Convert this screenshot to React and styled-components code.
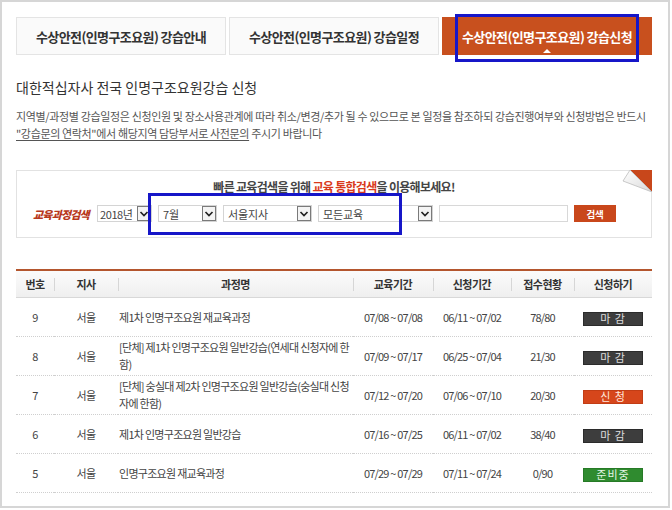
import React from "react";
import styled, { createGlobalStyle } from "styled-components";

const GlobalStyle = createGlobalStyle`
  html, body {
    margin: 0;
    padding: 0;
    background: #fff;
  }
  body {
    font-family: "Noto Sans CJK KR", "Noto Sans", sans-serif;
    color: #333;
  }
`;

const Frame = styled.div`
  position: relative;
  width: 670px;
  height: 508px;
  box-sizing: border-box;
  border: 2px solid #d6d6d6;
  padding: 15px 16px 0 14px;
  overflow: hidden;
`;

const Tabs = styled.div`
  display: grid;
  grid-template-columns: repeat(3, 1fr);
  gap: 3px;
`;

const Tab = styled.div`
  position: relative;
  height: 38px;
  box-sizing: border-box;
  display: flex;
  align-items: center;
  justify-content: center;
  font-size: 13px;
  font-weight: 700;
  letter-spacing: -0.6px;
  color: ${p => (p.active ? "#fff" : "#333")};
  background: ${p => (p.active ? "#c8501e" : "#fafafa")};
  border: 1px solid ${p => (p.active ? "#c8501e" : "#e4e4e4")};

  &::after {
    content: "";
    display: ${p => (p.active ? "block" : "none")};
    position: absolute;
    left: 50%;
    bottom: 1px;
    margin-left: -4px;
    border-left: 4px solid transparent;
    border-right: 4px solid transparent;
    border-bottom: 4px solid #fff;
  }
`;

const Title = styled.h2`
  margin: 22px 0 0;
  font-size: 14px;
  line-height: 20px;
  font-weight: 400;
  letter-spacing: 0;
  color: #333;
`;

const Notice = styled.p`
  margin: 11px 0 0;
  font-size: 11px;
  line-height: 17px;
  letter-spacing: -0.35px;
  color: #555;
`;

const Underlined = styled.span`
  text-decoration: underline;
  text-underline-offset: 2px;
`;

const SearchBox = styled.div`
  position: relative;
  margin-top: 28px;
  box-sizing: border-box;
  height: 68px;
  border: 1px solid #e2e2e2;
  padding: 8px 0 0 16px;
`;

const SearchHeading = styled.div`
  text-align: center;
  font-size: 12px;
  line-height: 16px;
  font-weight: 700;
  letter-spacing: -0.7px;
  color: #444;
  margin-left: -16px;
`;

const Highlight = styled.span`
  color: #d93a1c;
  text-decoration: underline;
  text-underline-offset: 2px;
`;

const SearchRow = styled.div`
  display: flex;
  align-items: center;
  gap: 6px;
  margin-top: 10px;
  height: 17px;
`;

const SearchLabel = styled.span`
  width: 62px;
  margin-right: -4px;
  font-size: 11px;
  font-weight: 900;
  letter-spacing: -0.8px;
  color: #b8381c;
  font-style: italic;
  white-space: nowrap;
`;

const Select = styled.div`
  width: ${p => p.width}px;
  height: 17px;
  box-sizing: border-box;
  border: 1px solid #d4d4d4;
  display: flex;
  align-items: center;
  justify-content: space-between;
  padding-left: ${p => (p.tight ? 2 : 4)}px;
  font-size: 11px;
  letter-spacing: ${p => (p.tight ? "-0.4px" : "-0.1px")};
  white-space: nowrap;
  color: #444;
  background: #fff;
`;

const ArrowBox = styled.span`
  flex: none;
  width: 14px;
  height: 15px;
  box-sizing: border-box;
  border: 1px solid #7a7a7a;
  background: #f4f4f4;
  display: flex;
  align-items: center;
  justify-content: center;
`;

const TextInput = styled.div`
  width: 129px;
  height: 17px;
  box-sizing: border-box;
  border: 1px solid #d8d8d8;
  background: #fff;
`;

const SearchButton = styled.button`
  width: 42px;
  height: 17px;
  border: none;
  padding: 0;
  background: #c9471b;
  color: #fff;
  font-family: inherit;
  font-size: 9.5px;
  font-weight: 700;
  letter-spacing: -0.3px;
`;

const Fold = styled.svg`
  position: absolute;
  top: -1px;
  right: -1px;
`;

const Table = styled.table`
  width: 100%;
  margin-top: 31px;
  border-collapse: collapse;
  table-layout: fixed;
  border-top: 2px solid #b4562e;
  font-size: 11px;
  letter-spacing: -0.5px;
  color: #444;
`;

const Th = styled.th`
  position: relative;
  height: 26px;
  padding: 0;
  font-weight: 700;
  color: #333;
  background: linear-gradient(to bottom, #fbfbfb, #efefef);
  border-bottom: 1px solid #d8d8d8;

  &::before {
    content: "";
    display: ${p => (p.first ? "none" : "block")};
    position: absolute;
    left: 0;
    top: 7px;
    height: 13px;
    border-left: 1px solid #d6d6d6;
  }
`;

const Td = styled.td`
  height: 38px;
  padding: ${p => (p.left ? "0 0 0 1px" : "0")};
  text-align: ${p => (p.left ? "left" : "center")};
  letter-spacing: ${p => (p.narrow ? "-0.8px" : p.left ? "-0.72px" : "inherit")};
  line-height: 17px;
  border-bottom: 1px dotted #cfcfcf;
`;

const statusColors = {
  closed: { bg: "#3d3d3d", border: "#2b2b2b", fg: "#dedede" },
  open: { bg: "#d6461b", border: "#c23d15", fg: "#ffe6dc" },
  ready: { bg: "#2f8b2f", border: "#267a26", fg: "#e4f5e4" },
};

const StatusButton = styled.span`
  display: inline-flex;
  align-items: center;
  justify-content: center;
  width: 60px;
  height: 14px;
  box-sizing: border-box;
  vertical-align: middle;
  font-size: 11px;
  letter-spacing: 1px;
  color: ${p => statusColors[p.status].fg};
  background: ${p => statusColors[p.status].bg};
  border: 1px solid ${p => statusColors[p.status].border};
`;

const Annotation = styled.div`
  position: absolute;
  left: ${p => p.x}px;
  top: ${p => p.y}px;
  width: ${p => p.w}px;
  height: ${p => p.h}px;
  box-sizing: border-box;
  border: 3px solid #1616c8;
  pointer-events: none;
`;

const statusLabel = { closed: "마 감", open: "신 청", ready: "준비중" };

const courses = [
  { no: 9, branch: "서울", title: "제1차 인명구조요원 재교육과정", edu: "07/08 ~ 07/08", apply: "06/11 ~ 07/02", count: "78/80", status: "closed" },
  { no: 8, branch: "서울", title: "[단체] 제1차 인명구조요원 일반강습(연세대 신청자에 한함)", edu: "07/09 ~ 07/17", apply: "06/25 ~ 07/04", count: "21/30", status: "closed" },
  { no: 7, branch: "서울", title: "[단체] 숭실대 제2차 인명구조요원 일반강습(숭실대 신청자에 한함)", edu: "07/12 ~ 07/20", apply: "07/06 ~ 07/10", count: "20/30", status: "open" },
  { no: 6, branch: "서울", title: "제1차 인명구조요원 일반강습", edu: "07/16 ~ 07/25", apply: "06/11 ~ 07/02", count: "38/40", status: "closed" },
  { no: 5, branch: "서울", title: "인명구조요원 재교육과정", edu: "07/29 ~ 07/29", apply: "07/11 ~ 07/24", count: "0/90", status: "ready" },
];

function Arrow() {
  return (
    <ArrowBox>
      <svg width="10" height="8" viewBox="0 0 10 8">
        <polyline points="1.5,2 5,5.5 8.5,2" fill="none" stroke="#222" strokeWidth="1.7" />
      </svg>
    </ArrowBox>
  );
}

function App() {
  return (
    <Frame>
      <GlobalStyle />
      <Tabs>
        <Tab>수상안전(인명구조요원) 강습안내</Tab>
        <Tab>수상안전(인명구조요원) 강습일정</Tab>
        <Tab active>수상안전(인명구조요원) 강습신청</Tab>
      </Tabs>

      <Title>대한적십자사 전국 인명구조요원강습 신청</Title>
      <Notice>
        지역별/과정별 강습일정은 신청인원 및 장소사용관계에 따라 취소/변경/추가 될 수 있으므로 본 일정을 참조하되 강습진행여부와 신청방법은 반드시
        <br />
        <Underlined>"강습문의 연락처"에서 해당지역 담당부서로 사전문의</Underlined> 주시기 바랍니다
      </Notice>

      <SearchBox>
        <SearchHeading>
          빠른 교육검색을 위해 <Highlight>교육 통합검색</Highlight>을 이용해보세요!
        </SearchHeading>
        <SearchRow>
          <SearchLabel>교육과정검색</SearchLabel>
          <Select width={55} tight>2018년<Arrow /></Select>
          <Select width={59}>7월<Arrow /></Select>
          <Select width={89}>서울지사<Arrow /></Select>
          <Select width={115}>모든교육<Arrow /></Select>
          <TextInput />
          <SearchButton>검색</SearchButton>
        </SearchRow>
        <Fold width="31" height="22" viewBox="0 0 31 22">
          <defs>
            <linearGradient id="curl" x1="0" y1="0" x2="1" y2="1">
              <stop offset="0" stopColor="#ffffff" />
              <stop offset="1" stopColor="#d9d9d9" />
            </linearGradient>
          </defs>
          <polygon points="9,0 31,0 31,22" fill="#c8471b" />
          <polygon points="9,0 2,11 31,22" fill="url(#curl)" stroke="#bdbdbd" strokeWidth="0.8" />
        </Fold>
      </SearchBox>

      <Table>
        <colgroup>
          <col style={{ width: 38 }} />
          <col style={{ width: 64 }} />
          <col style={{ width: 235 }} />
          <col style={{ width: 80 }} />
          <col style={{ width: 78 }} />
          <col style={{ width: 63 }} />
          <col style={{ width: 78 }} />
        </colgroup>
        <thead>
          <tr>
            <Th first>번호</Th>
            <Th>지사</Th>
            <Th>과정명</Th>
            <Th>교육기간</Th>
            <Th>신청기간</Th>
            <Th>접수현황</Th>
            <Th>신청하기</Th>
          </tr>
        </thead>
        <tbody>
          {courses.map(c => (
            <tr key={c.no}>
              <Td>{c.no}</Td>
              <Td>{c.branch}</Td>
              <Td left>{c.title}</Td>
              <Td narrow>{c.edu}</Td>
              <Td narrow>{c.apply}</Td>
              <Td narrow>{c.count}</Td>
              <Td>
                <StatusButton status={c.status}>{statusLabel[c.status]}</StatusButton>
              </Td>
            </tr>
          ))}
        </tbody>
      </Table>

      <Annotation x={453} y={12} w={184} h={48} />
      <Annotation x={146} y={191} w={254} h={42} />
    </Frame>
  );
}

export default App;
